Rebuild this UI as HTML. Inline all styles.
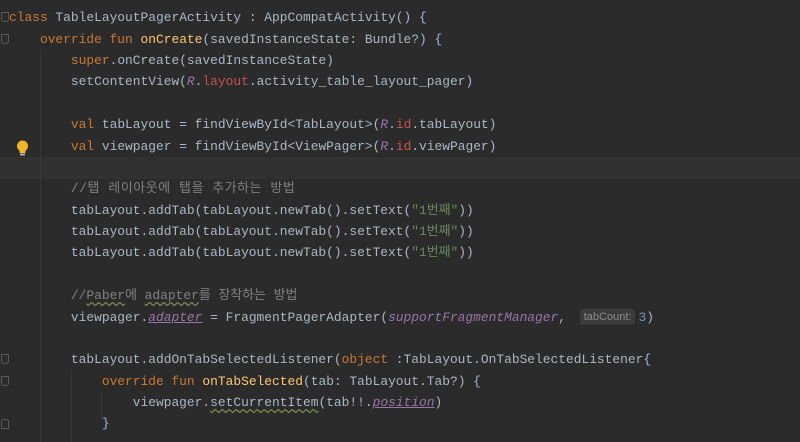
<!DOCTYPE html>
<html><head><meta charset="utf-8"><style>
body{margin:0;width:800px;height:442px;background:#2b2b2b;overflow:hidden;position:relative;font-family:"Liberation Mono","Noto Sans CJK KR",monospace;font-size:12.9px;color:#a9b7c6}
.l{position:absolute;left:9px;height:21px;line-height:21px;white-space:pre;margin-top:1px}
.k{color:#cc7832}.f{color:#ffc66d}.p{color:#9876aa}.i{font-style:italic}.s{color:#6a8759}.c{color:#808080}.n{color:#6897bb}.r{color:#c75450}
.u{text-decoration:underline}
.w{text-decoration:underline wavy #7a8a50;text-underline-offset:2px}
.kr{letter-spacing:0.6px}
.hint{display:inline-block;background:#3b3b3b;color:#8c8c8c;font-family:"Liberation Sans",sans-serif;font-size:11px;line-height:16px;padding:0 4px;border-radius:3px;margin:0 3px 0 6px;vertical-align:1px}
.g{position:absolute;width:1px;background:#393939}
.cur{position:absolute;left:0;width:800px;top:157px;height:22px;background:#313131}
.fold{position:absolute;left:1px;width:6px;height:8px;border:1px solid #5a5a5a;border-radius:0 0 3px 3px}
</style></head><body>
<div class="cur"></div>
<div class="g" style="left:40px;top:49px;height:393px"></div>
<div class="g" style="left:71px;top:369px;height:73px"></div>
<div class="g" style="left:101px;top:391px;height:30px"></div>
<div class="fold" style="top:12px"></div>
<div class="fold" style="top:34px"></div>
<div class="fold" style="top:354px"></div>
<div class="fold" style="top:376px"></div>
<div class="fold" style="top:419px;border-radius:3px 3px 0 0"></div>
<svg style="position:absolute;left:16px;top:140px" width="13" height="17" viewBox="0 0 13 17"><circle cx="6.5" cy="6" r="5.5" fill="#f0b52a"/><rect x="3.5" y="10" width="6" height="3" fill="#f0b52a"/><rect x="4" y="13.5" width="5" height="2" fill="#b0b0b0"/></svg>
<div class="l" style="top:6px"><span class="k">class</span> TableLayoutPagerActivity : AppCompatActivity() {</div>
<div class="l" style="top:28px">    <span class="k">override fun</span> <span class="f">onCreate</span>(savedInstanceState: Bundle?) {</div>
<div class="l" style="top:49px">        <span class="k">super</span>.onCreate(savedInstanceState)</div>
<div class="l" style="top:70px">        setContentView(<span class="p i">R</span>.<span class="r">layout</span>.activity_table_layout_pager)</div>
<div class="l" style="top:113px">        <span class="k">val</span> tabLayout = findViewById&lt;TabLayout&gt;(<span class="p i">R</span>.<span class="r">id</span>.tabLayout)</div>
<div class="l" style="top:135px">        <span class="k">val</span> viewpager = findViewById&lt;ViewPager&gt;(<span class="p i">R</span>.<span class="r">id</span>.viewPager)</div>
<div class="l" style="top:177px">        <span class="c kr">//탭 레이아웃에 탭을 추가하는 방법</span></div>
<div class="l" style="top:199px">        tabLayout.addTab(tabLayout.newTab().setText(<span class="s">"1번째"</span>))</div>
<div class="l" style="top:220px">        tabLayout.addTab(tabLayout.newTab().setText(<span class="s">"1번째"</span>))</div>
<div class="l" style="top:241px">        tabLayout.addTab(tabLayout.newTab().setText(<span class="s">"1번째"</span>))</div>
<div class="l" style="top:284px">        <span class="c">//<span class="w">Paber</span>에 <span class="w">adapter</span>를 장착하는 방법</span></div>
<div class="l" style="top:306px">        viewpager.<span class="p i u">adapter</span> = FragmentPagerAdapter(<span class="p i">supportFragmentManager</span>, <span class="hint">tabCount:</span><span class="n">3</span>)</div>
<div class="l" style="top:348px">        tabLayout.addOnTabSelectedListener(<span class="k">object</span> :TabLayout.OnTabSelectedListener{</div>
<div class="l" style="top:370px">            <span class="k">override fun</span> <span class="f">onTabSelected</span>(tab: TabLayout.Tab?) {</div>
<div class="l" style="top:391px">                viewpager.<span class="w">setCurrentItem</span>(tab!!.<span class="p i u">position</span>)</div>
<div class="l" style="top:412px">            }</div>
</body></html>
